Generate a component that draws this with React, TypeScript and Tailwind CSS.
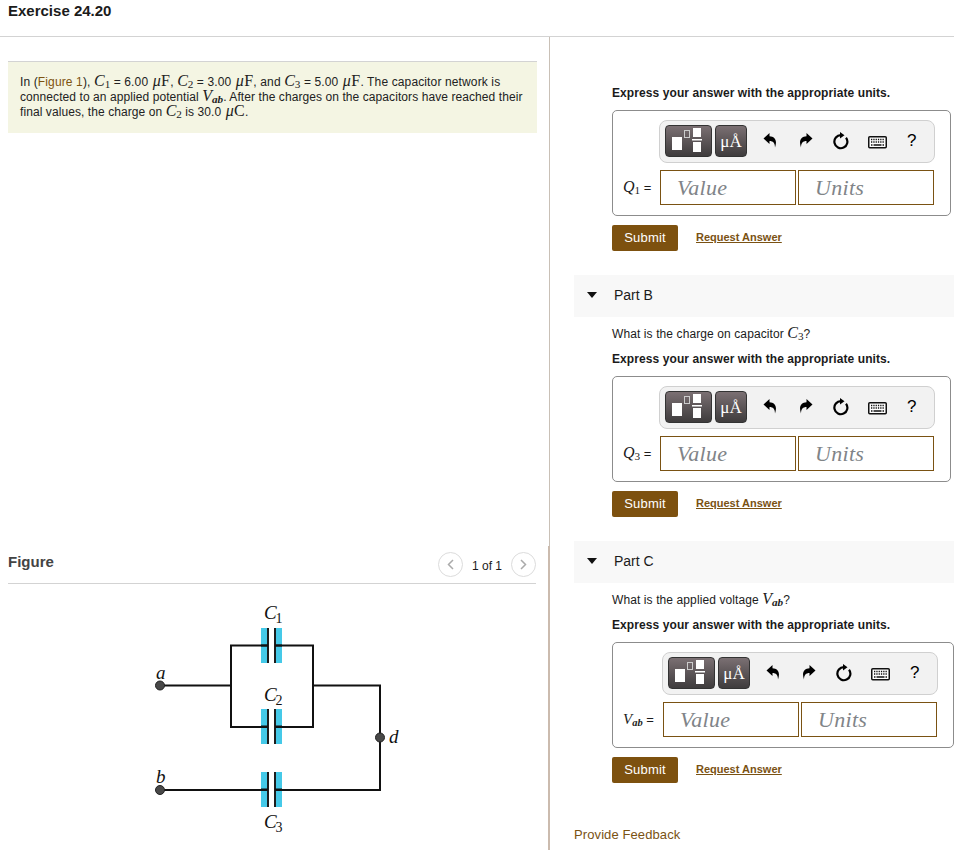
import { ReactNode } from "react";

interface SymbolProps {
    name: string;
    sub?: string;
    className?: string;
}

// Italic serif variable with an optional subscript, e.g. C1 or Vab.
function Symbol(props: SymbolProps) {
    const { name, sub, className = "text-[16px]" } = props;

    return (
        <span className={`font-['Liberation_Serif',serif] italic leading-[0] tracking-normal ${className}`}>
            {name}
            {sub && (
                <span className={`relative top-[2px] text-[0.7em] ${/\d/.test(sub) ? "not-italic" : "font-bold italic"}`}>
                    {sub}
                </span>
            )}
        </span>
    );
}

function Unit({ name }: { name: string }) {
    return (
        <span className="ml-px font-['Liberation_Serif',serif] text-[16px] leading-[0] tracking-[0.3px]">
            <i>μ</i>
            {name}
        </span>
    );
}

function ProblemStatement() {
    return (
        <section className="ml-2 mt-6 h-[72px] w-[529px] whitespace-nowrap border-t border-[#d3d3d3] bg-[#f4f5e3] pl-3 pt-[13px] text-[12px] leading-[15px] tracking-[0.08px] text-[#222]">
            <p className="h-[15px] tracking-[0.13px]">
                In (<a className="text-[#7e5310]">Figure 1</a>), <Symbol name="C" sub="1" /> = 6.00 <Unit name="F" />,{" "}
                <Symbol name="C" sub="2" /> = 3.00 <Unit name="F" />, and <Symbol name="C" sub="3" /> = 5.00{" "}
                <Unit name="F" />. The capacitor network is
            </p>
            <p className="h-[15px]">
                connected to an applied potential <Symbol name="V" sub="ab" />. After the charges on the capacitors have
                reached their
            </p>
            <p className="h-[15px]">
                final values, the charge on <Symbol name="C" sub="2" /> is 30.0 <Unit name="C" />.
            </p>
        </section>
    );
}

function PageButton({ d }: { d: string }) {
    return (
        <button className="flex size-[25px] items-center justify-center rounded-full border border-[#dcdcdc]">
            <svg width="7" height="11" viewBox="0 0 7 11" fill="none" stroke="#aaa" strokeWidth="1.5">
                <path d={d} />
            </svg>
        </button>
    );
}

function Capacitor({ x, y }: { x: number; y: number }) {
    return (
        <g transform={`translate(${x} ${y})`}>
            <rect x="0" y="0" width="6" height="35" fill="#45c9e8" />
            <rect x="15" y="0" width="6" height="35" fill="#45c9e8" />
            <path d="M7 0V35M14 0V35" stroke="#1d1d1d" strokeWidth="2" />
            <path d="M0 17.5H7M14 17.5H21" stroke="#111" strokeWidth="2" />
        </g>
    );
}

function Circuit() {
    return (
        <svg
            className="ml-[140px] mt-[11px] font-['Liberation_Serif',serif]"
            width="270"
            height="245"
            viewBox="140 595 270 245"
        >
            <Capacitor x={261} y={628} />
            <Capacitor x={261} y={709} />
            <Capacitor x={261} y={772} />
            <g fill="none" stroke="#111" strokeWidth="2">
                <path d="M268 645.5H231V727H268" />
                <path d="M275 645.5H313V727H275" />
                <path d="M160 685.5H231M313 685.5H380V790H275M160 790H268" />
            </g>
            <g fill="#484848" stroke="#222" strokeWidth="1">
                <circle cx="160" cy="685.5" r="4.5" />
                <circle cx="160" cy="790" r="4.5" />
                <circle cx="380" cy="737.5" r="4.5" />
            </g>
            <g fill="#111" fontSize="19" fontStyle="italic">
                <text x="156" y="679">a</text>
                <text x="156" y="783">b</text>
                <text x="389" y="743">d</text>
                <text x="264" y="619">C</text>
                <text x="264" y="701">C</text>
                <text x="264" y="828">C</text>
            </g>
            <g fill="#111" fontSize="14">
                <text x="275.5" y="623">1</text>
                <text x="275.5" y="705">2</text>
                <text x="275.5" y="832">3</text>
            </g>
        </svg>
    );
}

function Toolbar() {
    return (
        <div className="flex h-[43px] w-[276px] items-start rounded-lg border border-[#d0d0d0] bg-[#f2f2f2] pl-[5px] pt-1 text-black">
            <button className="h-8 w-[47px] rounded-[4px] border border-[#333] bg-linear-to-b from-[#7b7073] to-[#3f3c3d]">
                <svg width="45" height="30" viewBox="0 0 45 30">
                    <rect x="6" y="11" width="10" height="13" fill="#fff" />
                    <rect x="18.5" y="4.5" width="5" height="7" fill="none" stroke="#ccc" />
                    <path d="M27 2h8v9h-8zM26 13h10v1.5h-10zM27 16h8v10h-8z" fill="#fff" />
                </svg>
            </button>
            <button className="ml-[3px] h-8 w-8 rounded-[4px] border border-[#333] bg-linear-to-b from-[#7b7073] to-[#3f3c3d] pt-px font-['Liberation_Serif',serif] text-[17px] leading-[29px] text-white">
                μÅ
            </button>
            <svg className="ml-4 mt-2" width="14" height="15" viewBox="0 0 14 15">
                <path d="M0.500 5.500L6.500 0V3.200C12 3.500 14.500 7.500 12 14.500C12 10 10 8 6.500 8V11Z" />
            </svg>
            <svg className="ml-[22px] mt-2" width="14" height="15" viewBox="0 0 14 15">
                <path d="M13.500 5.500L7.500 0V3.200C2 3.500 -0.500 7.500 2 14.500C2 10 4 8 7.500 8V11Z" />
            </svg>
            <svg className="ml-[20px] mt-[7px]" width="16" height="18" viewBox="0 0 16 18" fill="none">
                <path d="M13 5.700A6.500 6.500 0 1 1 8 3.200" stroke="#000" strokeWidth="2.200" />
                <path d="M7 0L11.500 3.200L7 6.400Z" fill="#000" />
            </svg>
            <svg className="ml-[19px] mt-[11px]" width="19" height="13" viewBox="0 0 19 13">
                <rect x="0.750" y="0.750" width="17.500" height="11" rx="1" fill="#fff" stroke="#111" strokeWidth="1.500" />
                <path d="M3 3.500H16M3 6H16" stroke="#111" strokeWidth="1.400" strokeDasharray="1.300 1" />
                <path d="M3 9H4.500M5.500 9H13.500M14.500 9H16" stroke="#111" strokeWidth="1.400" />
            </svg>
            <span className="ml-5 mt-1 text-[17px] leading-6">?</span>
        </div>
    );
}

interface AnswerProps {
    label: ReactNode;
    wide?: boolean;
}

function Answer(props: AnswerProps) {
    const { label, wide } = props;

    return (
        <div className="ml-[62px]">
            <p className="h-[18px] whitespace-nowrap text-[12px] font-bold leading-[18px] tracking-[0.09px]">
                Express your answer with the appropriate units.
            </p>
            <div
                className={`mt-2 flex h-[106px] flex-col items-end rounded-[5px] border border-[#8c8c8c] pr-[15px] pt-[9px] ${wide ? "w-[342px]" : "w-[339px]"}`}
            >
                <Toolbar />
                <div className="mt-[7px] flex w-full items-center">
                    <div className="flex-1 whitespace-nowrap pl-[10px] text-[13px] leading-4">{label} =</div>
                    <div className="mr-px flex gap-[2px] font-['Liberation_Serif',serif] text-[22px] italic leading-[34px] tracking-[0.3px] text-[#808488]">
                        <div className="h-[35px] w-[136px] border border-[#7a5213] pl-4">Value</div>
                        <div className="h-[35px] w-[136px] border border-[#7a5213] pl-4">Units</div>
                    </div>
                </div>
            </div>
            <div className="mt-[9px] flex h-[26px] items-center">
                <button className="h-[26px] w-[66px] rounded-[2px] bg-[#7d510f] text-[13px] tracking-[0.2px] text-white">
                    Submit
                </button>
                <a className="mb-0.5 ml-[18px] text-[11px] font-bold text-[#7a5213] underline">Request Answer</a>
            </div>
        </div>
    );
}

interface PartProps extends AnswerProps {
    title: string;
    question: ReactNode;
}

function Part(props: PartProps) {
    const { title, question, label, wide } = props;

    return (
        <section className="mt-6 h-[242px]">
            <h2 className="ml-6 flex h-[42px] items-center bg-[#f8f8f8] pb-0.5 pl-[13px] text-[14px]">
                <svg width="10" height="6" viewBox="0 0 10 6">
                    <path d="M0 0H10L5 6Z" fill="#111" />
                </svg>
                <span className="ml-[17px]">{title}</span>
            </h2>
            <p className="ml-[62px] mt-2 h-[18px] whitespace-nowrap text-[12px] leading-[18px] tracking-[0.1px]">{question}</p>
            <div className="mt-[7px]">
                <Answer label={label} wide={wide} />
            </div>
        </section>
    );
}

export default function App() {
    return (
        <div className="h-[850px] w-[954px] overflow-hidden bg-white font-['Liberation_Sans',Arial,sans-serif] text-[#1b1b1b]">
            <h1 className="h-[37px] border-b border-[#d3d3d3] pl-2 text-[15px] font-bold leading-[22px]">Exercise 24.20</h1>
            <main className="flex h-[813px]">
                <div className="flex w-[550px] shrink-0 flex-col">
                    <div className="h-[509px] border-r border-[#c9c0b6]">
                        <ProblemStatement />
                    </div>
                    <div className="flex-1 border-r-2 border-[#cbbbae]">
                        <header className="ml-2 flex h-[38px] w-[528px] items-center border-b border-[#d3d3d3]">
                            <h2 className="mb-1 flex-1 text-[15px] font-bold text-[#444]">Figure</h2>
                            <PageButton d="M6 1L1.500 5.500L6 10" />
                            <span className="mt-0.5 w-12 text-center text-[12px]">1 of 1</span>
                            <PageButton d="M1 1L5.500 5.500L1 10" />
                        </header>
                        <Circuit />
                    </div>
                </div>
                <div className="w-[404px] pt-[47px]">
                    <Answer label={<Symbol name="Q" sub="1" />} />
                    <Part
                        title="Part B"
                        question={
                            <>
                                What is the charge on capacitor <Symbol name="C" sub="3" />?
                            </>
                        }
                        label={<Symbol name="Q" sub="3" />}
                    />
                    <Part
                        title="Part C"
                        question={
                            <>
                                What is the applied voltage <Symbol name="V" sub="ab" />?
                            </>
                        }
                        label={<Symbol name="V" sub="ab" className="text-[15px]" />}
                        wide
                    />
                    <a className="ml-6 mt-[42px] block text-[13px] leading-[20px] tracking-[0.1px] text-[#7a5213]">
                        Provide Feedback
                    </a>
                </div>
            </main>
        </div>
    );
}
